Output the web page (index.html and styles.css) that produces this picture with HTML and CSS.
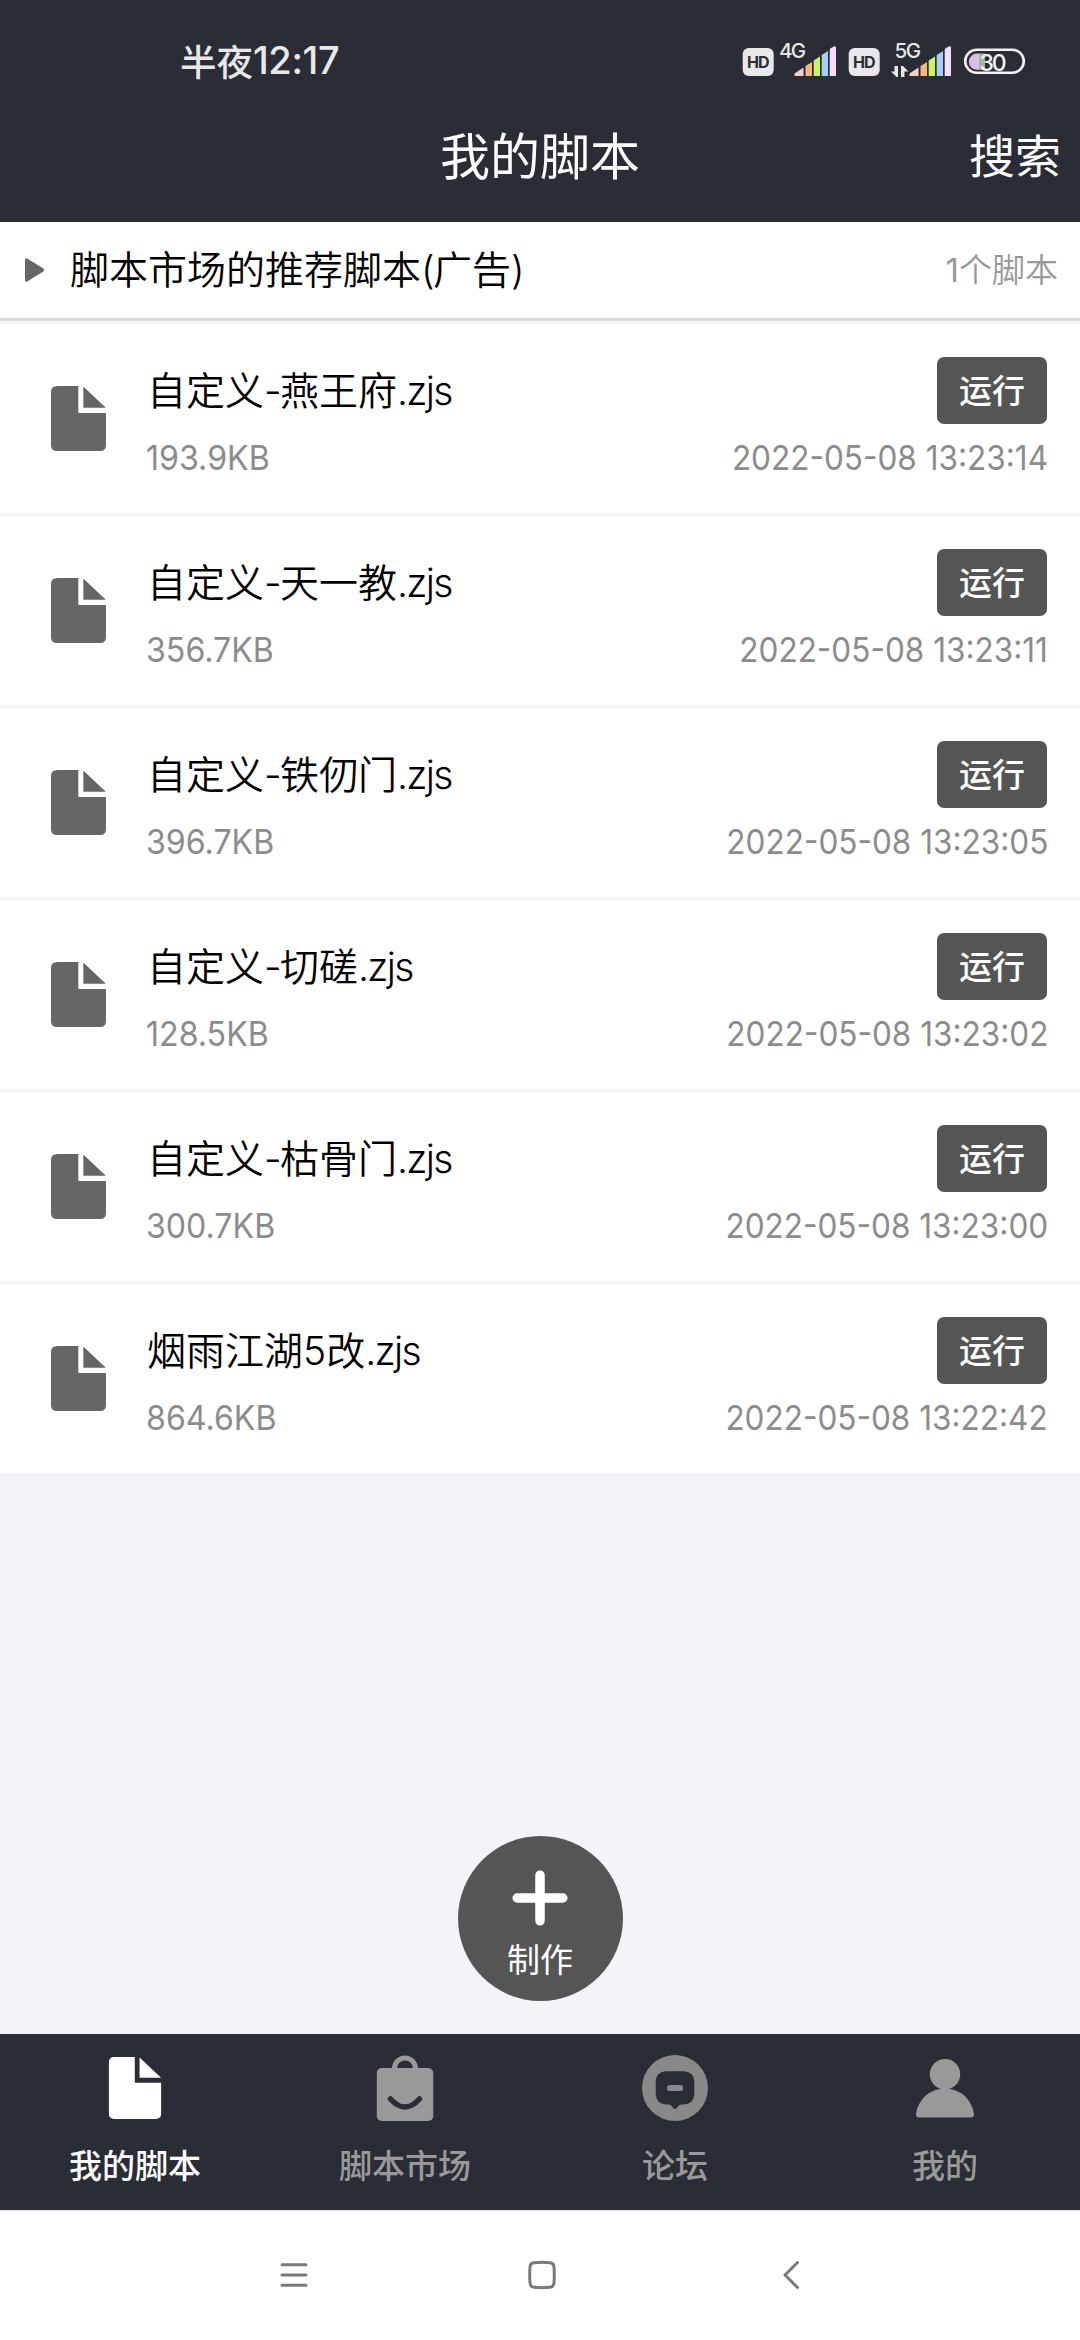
FILE: index.html
```html
<!DOCTYPE html>
<html lang="zh-CN">
<head>
<meta charset="utf-8">
<title>我的脚本</title>
<link rel="stylesheet" href="styles.css">
</head>
<body>
<svg class="defs" width="0" height="0">
  <symbol id="doc" viewBox="0 0 55 65">
    <path d="M6 0H27.3V27H55V59Q55 65 49 65H6Q0 65 0 59V6Q0 0 6 0Z"/>
    <path d="M32.3 0.5L54.8 21.7H32.3Z"/>
  </symbol>
  <symbol id="bars" viewBox="0 0 43 31">
    <path fill="#f9cfcb" d="M0.5 30V27.500L9.500 21.500V30Z"/>
    <path fill="#f6b878" d="M11.500 30V20L18 16V30Z"/>
    <path fill="#c8f565" d="M19.700 30V14.500L26 10.500V30Z"/>
    <path fill="#a5cff8" d="M27.700 30V9L34 5V30Z"/>
    <path fill="#f5dcf8" d="M35.700 30V4Q35.700 2.500 37 2L40.500 .3Q42 0 42 1.500V30Z"/>
  </symbol>
</svg>

<header class="top">
  <div class="status">
    <div class="clock">半夜<span class="digits">12:17</span></div>
    <svg class="status-icons" width="290" height="60" viewBox="740 30 290 60">
      <rect x="742.7" y="48" width="31" height="28" rx="6" fill="#e8e8e8"/>
      <text class="hd" x="758.200" y="67.700" text-anchor="middle" textLength="22.500">HD</text>
      <text class="net" x="779" y="58" textLength="27">4G</text>
      <use href="#bars" x="794" y="46" width="43" height="31"/>
      <rect x="848.7" y="48" width="31" height="28" rx="6" fill="#e8e8e8"/>
      <text class="hd" x="864.200" y="67.700" text-anchor="middle" textLength="22.500">HD</text>
      <text class="net" x="894.500" y="58" textLength="26.500">5G</text>
      <path d="M891 71.500H894.500V66H898V77H896.500ZM901 77V66H903L908.500 71.500H904.500V77Z" fill="#e8e8e8"/>
      <use href="#bars" x="909" y="46" width="43" height="31"/>
      <path d="M979 53.500H977A8 8 0 0 0 977 69.800H979Z" fill="#d9bfe2"/>
      <rect x="979" y="53.500" width="6" height="16.300" fill="#a8b39c"/>
      <rect x="965.200" y="49.700" width="58.600" height="23" rx="11.500" fill="none" stroke="#f2f2f2" stroke-width="2.600"/>
      <text class="level" x="979.500" y="71" textLength="27">30</text>
    </svg>
  </div>
  <div class="titlebar">
    <h1>我的脚本</h1>
    <a class="search">搜索</a>
  </div>
</header>

<main>
  <section class="promo">
    <svg width="20" height="24" viewBox="0 0 20 24" fill="#666"><path d="M0 2Q0-.8 2.600.7L18 10.300Q20 12 18 13.700L2.600 23.300Q0 24.800 0 22Z"/></svg>
    <span class="promo-name">脚本市场的推荐脚本<span class="lat">(</span>广告<span class="lat">)</span></span>
    <span class="promo-count"><span class="digits">1</span>个脚本</span>
  </section>

  <ul class="list">
    <li class="row">
      <svg class="file"><use href="#doc"/></svg>
      <div class="name">自定义<span class="lat">-</span>燕王府<span class="lat">.zjs</span></div>
      <button class="run">运行</button>
      <div class="size">193.9KB</div>
      <time class="date">2022-05-08 13:23:14</time>
    </li>
    <li class="row">
      <svg class="file"><use href="#doc"/></svg>
      <div class="name">自定义<span class="lat">-</span>天一教<span class="lat">.zjs</span></div>
      <button class="run">运行</button>
      <div class="size">356.7KB</div>
      <time class="date">2022-05-08 13:23:11</time>
    </li>
    <li class="row">
      <svg class="file"><use href="#doc"/></svg>
      <div class="name">自定义<span class="lat">-</span>铁仞门<span class="lat">.zjs</span></div>
      <button class="run">运行</button>
      <div class="size">396.7KB</div>
      <time class="date">2022-05-08 13:23:05</time>
    </li>
    <li class="row">
      <svg class="file"><use href="#doc"/></svg>
      <div class="name">自定义<span class="lat">-</span>切磋<span class="lat">.zjs</span></div>
      <button class="run">运行</button>
      <div class="size">128.5KB</div>
      <time class="date">2022-05-08 13:23:02</time>
    </li>
    <li class="row">
      <svg class="file"><use href="#doc"/></svg>
      <div class="name">自定义<span class="lat">-</span>枯骨门<span class="lat">.zjs</span></div>
      <button class="run">运行</button>
      <div class="size">300.7KB</div>
      <time class="date">2022-05-08 13:23:00</time>
    </li>
    <li class="row">
      <svg class="file"><use href="#doc"/></svg>
      <div class="name">烟雨江湖<span class="num">5</span>改<span class="lat">.zjs</span></div>
      <button class="run">运行</button>
      <div class="size">864.6KB</div>
      <time class="date">2022-05-08 13:22:42</time>
    </li>
  </ul>

  <button class="make">
    <svg width="56" height="56" viewBox="0 0 56 56" fill="none" stroke="#fff" stroke-width="9.500" stroke-linecap="round"><path d="M28 5.200V50.800M5.200 28H50.800"/></svg>
    <span>制作</span>
  </button>
</main>

<nav class="tabs">
  <a class="tab active">
    <svg width="66" height="66" viewBox="0 0 66 66"><use href="#doc" x="6.500" y="2" width="53" height="62"/></svg>
    <span>我的脚本</span>
  </a>
  <a class="tab">
    <svg width="66" height="66" viewBox="0 0 66 66">
      <path d="M22.500 15V13.500A10.500 10.500 0 0 1 43.500 13.500V15" fill="none" stroke="#999" stroke-width="5"/>
      <rect x="4.800" y="13" width="56.500" height="53" rx="5"/>
      <path d="M18.500 44Q33 60 47.500 44" fill="none" stroke="#2a2c36" stroke-width="5.500" stroke-linecap="round"/>
    </svg>
    <span>脚本市场</span>
  </a>
  <a class="tab forum">
    <svg width="66" height="66" viewBox="0 0 66 66">
      <circle cx="33" cy="33" r="33"/>
      <path fill="#2a2c36" d="M25 16.300H41Q52.300 16.300 52.300 28V37.500Q52.300 49.500 41 49.500H39Q38 49.500 37 50.500L34.500 53.200Q33 54.500 31.500 53.200L29 50.500Q28 49.500 27 49.500H25Q13.700 49.500 13.700 37.500V28Q13.700 16.300 25 16.300Z"/>
      <rect x="25" y="30" width="16" height="6" rx="2.500"/>
    </svg>
    <span>论坛</span>
  </a>
  <a class="tab">
    <svg width="66" height="66" viewBox="0 0 66 66">
      <circle cx="33" cy="19.200" r="15.200"/>
      <path d="M28 34Q33 31.500 38 34C50 36 59 44 62 58.500Q62.300 62.500 59 62.500H7Q3.700 62.500 4 58.500C7 44 16 36 28 34Z"/>
    </svg>
    <span>我的</span>
  </a>
</nav>

<footer class="sysnav">
  <svg width="30" height="30" viewBox="0 0 30 30"><path d="M3 4.800H27M3 15H27M3 25.200H27"/></svg>
  <svg width="30" height="30" viewBox="0 0 30 30"><path d="M7 2.700Q15 2 23 2.700Q26.700 3 27 7Q27.600 15 27 23Q26.700 27 23 27.300Q15 28 7 27.300Q3.300 27 3 23Q2.400 15 3 7Q3.300 3 7 2.700Z"/></svg>
  <svg width="30" height="30" viewBox="0 0 30 30"><path d="M22.500 2.500L10 15L22.500 27.500"/></svg>
</footer>
</body>
</html>
```

FILE: styles.css
```css
* { box-sizing: border-box; margin: 0; padding: 0; }
body {
  width: 1080px;
  height: 2340px;
  display: flex;
  flex-direction: column;
  overflow: hidden;
  background: #f3f3f9;
  color: #000;
  font-family: "Noto Sans CJK SC", sans-serif;
}
.defs { position: absolute; }
button { border: 0; font: inherit; }

.top { height: 222px; background: #2a2c36; color: #fff; }
.status {
  height: 100px;
  padding: 20px 50px 0 180px;
  display: flex;
  align-items: center;
  justify-content: space-between;
  color: #e8e8e8;
}
.clock {
  display: flex;
  align-items: center;
  height: 78px;
  font-size: 36.5px;
  font-weight: 500;
}
.clock .digits { font: 500 38px Inter, sans-serif; letter-spacing: -.4px; }
.hd { font: 700 16px Inter, sans-serif; fill: #2a2c36; }
.net { font: 500 20.500px Inter, sans-serif; fill: #e8e8e8; }
.level { font: 500 23px Inter, sans-serif; fill: #f2f2f2; }

.titlebar {
  display: grid;
  grid-template-columns: 1fr auto 1fr;
  align-items: center;
  height: 105px;
}
.titlebar h1 { grid-column: 2; font-size: 50px; font-weight: 400; line-height: 60px; }
.search { justify-self: end; padding-right: 19px; font-size: 46px; line-height: 60px; }

main { flex: 1; display: flex; flex-direction: column; }
.promo {
  height: 99px;
  padding: 0 22px 0 25px;
  display: flex;
  align-items: center;
  background: #fff;
  border-bottom: 3px solid #d6d6db;
}
.promo-name { margin: 0 auto 0 25px; padding-bottom: 4px; font-size: 39px; font-weight: 350; line-height: 60px; }
.promo-count { padding-bottom: 3px; color: #999; font-size: 33px; font-weight: 350; line-height: 60px; }
.promo-count .digits { font-family: Inter, sans-serif; font-weight: 400; }
.lat, .num { font-family: Inter, sans-serif; }
.lat { letter-spacing: -1.700px; }

.list { list-style: none; margin-top: 3px; display: grid; gap: 3px; }
.row {
  height: 189px;
  padding: 33px 33px 0 51px;
  display: grid;
  grid-template-columns: 96px 1fr auto;
  grid-template-rows: 67px 68px;
  background: #fff;
}
.file { grid-row: 1 / 3; width: 55px; height: 65px; margin-top: 29px; fill: #666; }
.name { font-size: 39px; font-weight: 350; line-height: 62px; }
.run {
  justify-self: end;
  width: 110px;
  height: 67px;
  padding-bottom: 2px;
  border-radius: 7px;
  background: #555;
  color: #fff;
  font-size: 33px;
  font-weight: 500;
  line-height: 65px;
}
.size, .date { font: 400 34px/68px Inter, sans-serif; color: #8c8c8c; white-space: nowrap; }
.size { grid-column: 2; margin-left: -1px; transform: scaleX(.945); transform-origin: left; }
.date { grid-column: 3; justify-self: end; margin-right: -1px; transform: scaleX(.927); transform-origin: right; }

.make {
  align-self: center;
  width: 165px;
  height: 165px;
  margin: auto 0 33px;
  padding-top: 34px;
  display: flex;
  flex-direction: column;
  align-items: center;
  border-radius: 50%;
  background: #555;
  color: #fff;
}
.make span { margin-top: 7px; font-size: 33px; line-height: 50px; }

.tabs {
  height: 176px;
  display: grid;
  grid-template-columns: repeat(4, 1fr);
  background: #2a2c36;
}
.tab {
  padding-top: 21px;
  display: flex;
  flex-direction: column;
  align-items: center;
  color: #999;
  fill: #999;
}
.tab span { margin-top: 18px; font-size: 33px; font-weight: 500; line-height: 50px; }
.tab.active { color: #fff; fill: #fff; }
.forum svg { fill: #888; }

.sysnav {
  height: 130px;
  padding: 0 275px 1px 279px;
  display: flex;
  align-items: center;
  justify-content: space-between;
  background: #fff;
  border-top: 1px solid #e4e4e4;
}
.sysnav svg { fill: none; stroke: #7a7a7a; stroke-width: 3; stroke-linecap: round; stroke-linejoin: round; }
```
